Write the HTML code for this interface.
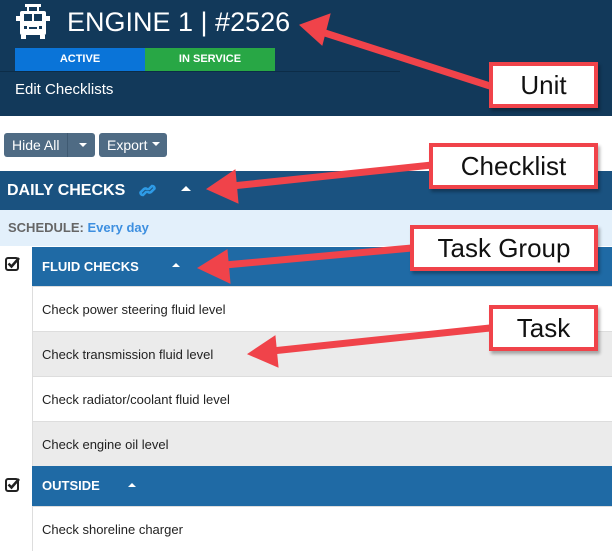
<!DOCTYPE html>
<html><head><style>
*{margin:0;padding:0;box-sizing:border-box}
body{width:612px;height:551px;overflow:hidden;font-family:"Liberation Sans",Arial,sans-serif;background:#fff;position:relative}
.abs{position:absolute}
.hdr{left:0;top:0;width:612px;height:116px;background:#12395a}
.title{left:67px;top:7px;color:#fff;font-size:27px;white-space:nowrap}
.badge{top:48px;height:23px;color:#fff;font-size:11px;font-weight:bold;text-align:center;line-height:23px}
.btn{top:133px;height:24px;background:#4f6b84;color:#fff;font-size:14px;line-height:24px;border-radius:3px}
.bar{color:#fff;font-weight:bold}
.task{left:32px;width:580px;height:45px;border-top:1px solid #ddd;border-left:1px solid #ddd;font-size:13px;color:#222;padding-left:9px;line-height:45px}
.box{background:#fff;border:4px solid #f0434a;font-size:26px;color:#111;text-align:center;box-shadow:2px 3px 3px rgba(0,0,0,.3)}
</style></head><body>
<div class="abs hdr"></div>
<svg class="abs" style="left:16px;top:4px" width="34" height="36" viewBox="0 0 34 36">
<rect x="9" y="0" width="16" height="3" fill="#fff"/><rect x="11" y="3" width="2" height="4" fill="#fff"/><rect x="21" y="3" width="2" height="4" fill="#fff"/>
<rect x="4" y="7" width="26" height="24" rx="2" fill="#fff"/>
<rect x="0" y="12" width="4" height="5" fill="#fff"/><rect x="30" y="12" width="4" height="5" fill="#fff"/>
<rect x="8" y="10" width="8" height="7" fill="#12395a"/><rect x="18" y="10" width="8" height="7" fill="#12395a"/>
<rect x="8" y="22" width="3" height="3" fill="#12395a"/><rect x="23" y="22" width="3" height="3" fill="#12395a"/><rect x="13" y="23" width="8" height="2" fill="#12395a"/>
<rect x="5" y="31" width="5" height="4" fill="#fff"/><rect x="24" y="31" width="5" height="4" fill="#fff"/></svg>
<div class="abs title">ENGINE 1 | #2526</div>
<div class="abs badge" style="left:15px;width:130px;background:#0a74d8">ACTIVE</div>
<div class="abs badge" style="left:145px;width:130px;background:#28a745">IN SERVICE</div>
<div class="abs" style="left:0;top:71px;width:400px;height:1px;background:#0c2c47"></div>
<div class="abs" style="left:15px;top:81px;color:#fff;font-size:15px">Edit Checklists</div>
<div class="abs btn" style="left:4px;width:91px;padding-left:8px">Hide All<span class="abs" style="left:63px;top:0;width:1px;height:24px;background:#3f5a72"></span><span class="abs" style="left:75px;top:10px;border:4px solid transparent;border-top-color:#fff"></span></div>
<div class="abs btn" style="left:99px;width:68px;padding-left:8px">Export<span class="abs" style="left:53px;top:9px;border:4px solid transparent;border-top-color:#fff"></span></div>
<div class="abs bar" style="left:0;top:171px;width:612px;height:39px;background:#1a5280;font-size:16px;line-height:39px;padding-left:7px">DAILY CHECKS
<svg class="abs" style="left:139px;top:11px" width="17" height="17" viewBox="0 0 17 17"><g fill="none" stroke="#2e9be6" stroke-width="2.6" stroke-linecap="round"><path d="M7 10 L4 13 A2.3 2.3 0 0 1 1.5 10.5 L5 7 A2.3 2.3 0 0 1 8 7"/><path d="M10 7 L13 4 A2.3 2.3 0 0 1 15.5 6.5 L12 10 A2.3 2.3 0 0 1 9 10"/></g></svg>
<span class="abs" style="left:181px;top:15px;border:5px solid transparent;border-bottom-color:#fff;border-top:0"></span></div>
<div class="abs" style="left:0;top:210px;width:612px;height:36px;background:#e3f0fb;font-size:13px;line-height:36px;padding-left:8px;font-weight:bold;color:#666">SCHEDULE: <span style="color:#3d8fe0">Every day</span></div>
<svg class="abs" style="left:5px;top:256px" width="16" height="15" viewBox="0 0 16 15"><rect x="1" y="2" width="12" height="12" rx="2" fill="#fff" stroke="#222" stroke-width="2"/><path d="M3.5 7.5 L6.5 10.5 L14 2" fill="none" stroke="#222" stroke-width="2.6"/></svg>
<div class="abs bar" style="left:32px;top:247px;width:580px;height:39px;background:#1f6aa5;font-size:13px;line-height:39px;padding-left:10px">FLUID CHECKS<span class="abs" style="left:140px;top:16px;border:4px solid transparent;border-bottom-color:#fff;border-top:0"></span></div>
<div class="abs task" style="top:286px;background:#fff">Check power steering fluid level</div>
<div class="abs task" style="top:331px;background:#ebebeb">Check transmission fluid level</div>
<div class="abs task" style="top:376px;background:#fff">Check radiator/coolant fluid level</div>
<div class="abs task" style="top:421px;background:#ebebeb">Check engine oil level</div>
<svg class="abs" style="left:5px;top:477px" width="16" height="15" viewBox="0 0 16 15"><rect x="1" y="2" width="12" height="12" rx="2" fill="#fff" stroke="#222" stroke-width="2"/><path d="M3.5 7.5 L6.5 10.5 L14 2" fill="none" stroke="#222" stroke-width="2.6"/></svg>
<div class="abs bar" style="left:32px;top:466px;width:580px;height:40px;background:#1f6aa5;font-size:13px;line-height:40px;padding-left:10px">OUTSIDE<span class="abs" style="left:96px;top:17px;border:4px solid transparent;border-bottom-color:#fff;border-top:0"></span></div>
<div class="abs task" style="top:506px;background:#fff">Check shoreline charger</div>
<svg class="abs" style="left:0;top:0" width="612" height="551">
<g stroke="#f0434a" stroke-width="7" fill="#f0434a">
<line x1="490" y1="86" x2="325" y2="33"/><polygon points="300,25 330,14 322,45" stroke-width="1"/>
<line x1="432" y1="165" x2="232" y2="186"/><polygon points="207,189 235,170 238,203" stroke-width="1"/>
<line x1="412" y1="248" x2="225" y2="265"/><polygon points="198,268 227,250 230,283" stroke-width="1"/>
<line x1="490" y1="328" x2="272" y2="351"/><polygon points="248,354 275,336 278,367" stroke-width="1"/>
</g></svg>
<div class="abs box" style="left:489px;top:62px;width:109px;height:46px;line-height:38px">Unit</div>
<div class="abs box" style="left:429px;top:143px;width:169px;height:46px;line-height:38px">Checklist</div>
<div class="abs box" style="left:410px;top:225px;width:188px;height:46px;line-height:38px">Task Group</div>
<div class="abs box" style="left:489px;top:305px;width:109px;height:46px;line-height:38px">Task</div>
</body></html>
